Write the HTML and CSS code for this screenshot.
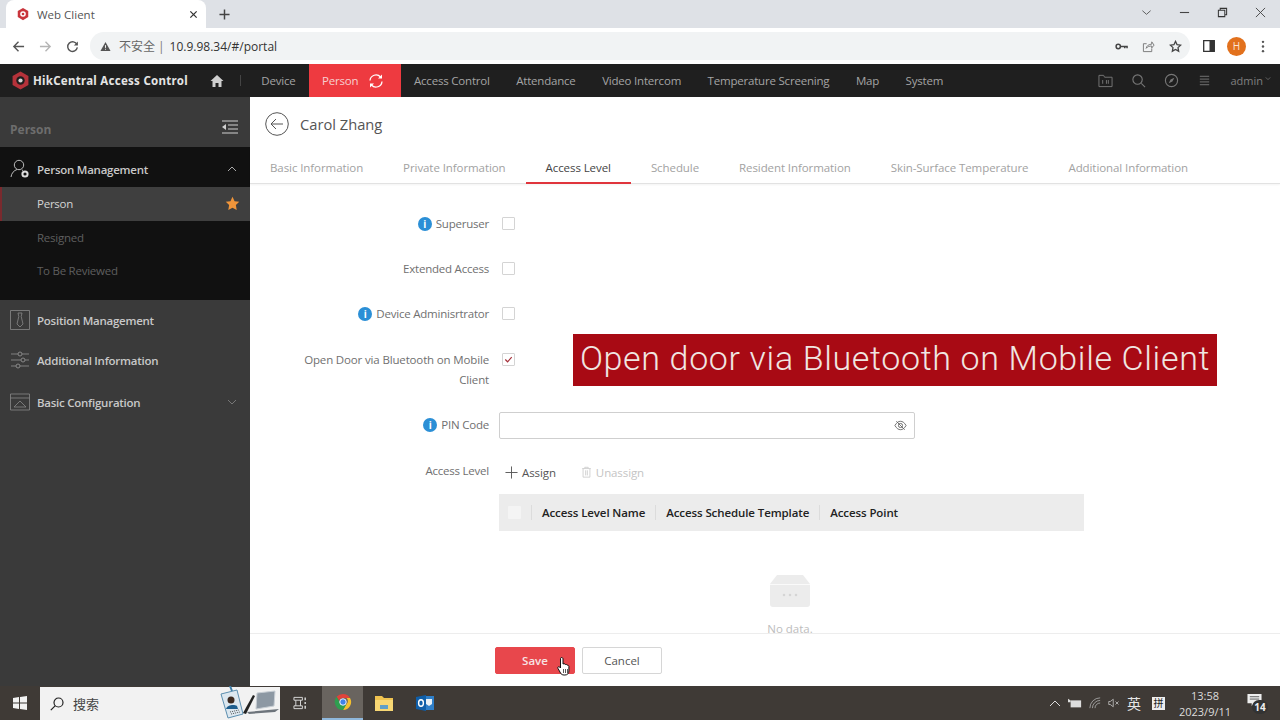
FILE: index.html
```html
<!DOCTYPE html>
<html lang="en">
<head>
    <meta charset="UTF-8">
    <meta name="viewport" content="width=device-width, initial-scale=1.0">
    <title>Web Client</title>
    <link rel="stylesheet" href="styles.css">
</head>
<body>
    <!-- browser chrome -->
    <div class="tabstrip">
        <div class="tab">
            <svg class="tab-logo" viewBox="0 0 16 16"><path d="M8 1l6 3.500v7L8 15l-6-3.500v-7z" fill="#c9353c"/><circle cx="8" cy="8" r="3.200" fill="#fff"/><circle cx="8" cy="8" r="1.500" fill="#c9353c"/></svg>
            <span class="tab-title">Web Client</span>
            <svg class="tab-close" viewBox="0 0 10 10"><path d="M1.500 1.500l7 7M8.500 1.500l-7 7" stroke="#333" stroke-width="1.400"/></svg>
        </div>
        <svg class="tab-new" viewBox="0 0 12 12"><path d="M6 .5v11M.5 6h11" stroke="#444" stroke-width="1.600"/></svg>
        <div class="window-btns">
            <svg viewBox="0 0 12 12"><path d="M1.500 4l4.500 4 4.500-4" fill="none" stroke="#555" stroke-width="1"/></svg>
            <svg viewBox="0 0 12 12"><path d="M1 6h10" stroke="#444" stroke-width="1.200"/></svg>
            <svg viewBox="0 0 12 12"><path d="M1.500 3.500h7v7h-7zM3.500 3.500v-2h7v7h-2" fill="none" stroke="#333" stroke-width="1.100"/></svg>
            <svg viewBox="0 0 12 12"><path d="M1 1l10 10M11 1L1 11" stroke="#444" stroke-width="1"/></svg>
        </div>
    </div>
    <div class="toolbar">
        <svg class="tool-icon" viewBox="0 0 14 14"><path d="M13 7H2M7 2L2 7l5 5" fill="none" stroke="#555" stroke-width="1.500"/></svg>
        <svg class="tool-icon" viewBox="0 0 14 14"><path d="M1 7h11M7 2l5 5-5 5" fill="none" stroke="#b5b5b5" stroke-width="1.500"/></svg>
        <svg class="tool-icon" viewBox="0 0 14 14"><path d="M11.800 5A5.200 5.200 0 1 0 12.200 8" fill="none" stroke="#555" stroke-width="1.500"/><path d="M12.800 1.500v4.300H8.500z" fill="#555"/></svg>
        <div class="omnibox">
            <svg class="warn-icon" viewBox="0 0 12 12"><path d="M6 1l5.500 10H.5z" fill="#555"/><path d="M6 4.500v3M6 8.500v1" stroke="#fff" stroke-width="1"/></svg>
            <span class="not-secure">不安全</span>
            <span class="omni-sep">|</span>
            <span class="url">10.9.98.34/#/portal</span>
            <div class="omni-actions">
                <svg viewBox="0 0 14 14"><circle cx="3.500" cy="7" r="2.300" fill="none" stroke="#444" stroke-width="1.600"/><path d="M6 7h7v2M10.500 7v2" fill="none" stroke="#444" stroke-width="1.600"/></svg>
                <svg viewBox="0 0 14 14"><path d="M5 4H1.500v8.500h9V9M4.500 9c.5-3 3-4.500 6-4.500V2L13 5.500 10.500 8.500V6.500c-2.500 0-4.500.5-6 2.500z" fill="none" stroke="#777" stroke-width="1"/></svg>
                <svg viewBox="0 0 14 14"><path d="M7 1.500l1.700 3.600 3.800.5-2.800 2.600.7 3.800L7 10.100 3.600 12l.7-3.800L1.500 5.600l3.800-.5z" fill="none" stroke="#444" stroke-width="1.400"/></svg>
            </div>
        </div>
        <svg class="side-panel" viewBox="0 0 12 12"><path d="M.7.700h10.600v10.600H.7z" fill="#fff" stroke="#333" stroke-width="1.300"/><path d="M6.500 1h5v10h-5z" fill="#333"/></svg>
        <div class="avatar">H</div>
        <svg class="kebab" viewBox="0 0 4 14"><circle cx="2" cy="2" r="1.300" fill="#555"/><circle cx="2" cy="7" r="1.300" fill="#555"/><circle cx="2" cy="12" r="1.300" fill="#555"/></svg>
    </div>

    <!-- app header -->
    <div class="appbar">
        <div class="brand">
            <svg class="brand-logo" viewBox="0 0 18 18"><path d="M9 .5l7.500 4.200v8.600L9 17.500l-7.500-4.200V4.700z" fill="#b5323a"/><circle cx="9" cy="9" r="4" fill="#1f1f1f"/><circle cx="9" cy="9" r="2" fill="#d8d8d8"/></svg>
            <span class="brand-name">HikCentral Access Control</span>
        </div>
        <svg class="home-icon" viewBox="0 0 14 14"><path d="M7 1L.5 7H2.500v6H5.500V9h3v4h3V7h2z" fill="#cfcfcf"/></svg>
        <span class="nav-sep"></span>
        <nav class="nav">
            <a class="nav-item">Device</a>
            <a class="nav-item active">Person
                <svg class="sync-icon" viewBox="0 0 16 16"><path d="M2 7.500A6 6 0 0 1 12.500 4M14 8.500A6 6 0 0 1 3.500 12" fill="none" stroke="#fff" stroke-width="1.300"/><path d="M14 1.500v4h-4zM2 14.500v-4h4z" fill="#fff"/></svg>
            </a>
            <a class="nav-item">Access Control</a>
            <a class="nav-item">Attendance</a>
            <a class="nav-item">Video Intercom</a>
            <a class="nav-item">Temperature Screening</a>
            <a class="nav-item">Map</a>
            <a class="nav-item">System</a>
        </nav>
        <div class="app-actions">
            <svg viewBox="0 0 16 14"><path d="M1 1.500h5l1 2h8v10H1z" fill="none" stroke="#777" stroke-width="1"/><path d="M5 6.500v4M9 6.500v4M11 6.500v4" stroke="#777" stroke-width="1"/></svg>
            <svg viewBox="0 0 16 16"><circle cx="7" cy="7" r="5" fill="none" stroke="#777" stroke-width="1.200"/><path d="M11 11l4 4" stroke="#777" stroke-width="1.200"/></svg>
            <svg viewBox="0 0 16 16"><circle cx="8" cy="8" r="6.500" fill="none" stroke="#777" stroke-width="1.200"/><path d="M11 5L9 9 5 11l2-4z" fill="#777"/></svg>
            <svg viewBox="0 0 16 16"><path d="M3 3.500h10M3 6.500h10M3 9.500h10M3 12.500h10" stroke="#777" stroke-width="1"/></svg>
            <span class="admin">admin</span>
            <svg class="admin-caret" viewBox="0 0 8 5"><path d="M1 1l3 3 3-3" fill="none" stroke="#777" stroke-width="1"/></svg>
        </div>
    </div>

    <div class="main">
        <aside class="sidebar">
            <div class="side-head">
                <span class="side-title">Person</span>
                <svg class="collapse-icon" viewBox="0 0 18 14"><path d="M1 1h16M7 5h10M7 9h10M1 13h16" stroke="#d0d0d0" stroke-width="1.100"/><path d="M5 4v6L1 7z" fill="#d0d0d0"/></svg>
            </div>
            <div class="side-group open">
                <div class="side-item">
                    <svg class="side-icon" viewBox="0 0 20 20"><circle cx="9" cy="6" r="4.700" fill="none" stroke="#bbb" stroke-width="1"/><path d="M1 18c.5-4 3-6.500 6-7.500M12 11l1 .5" fill="none" stroke="#bbb" stroke-width="1"/><circle cx="15" cy="15" r="2.600" fill="none" stroke="#ddd" stroke-width="2"/></svg>
                    <span class="side-label">Person Management</span>
                    <svg class="chevron" viewBox="0 0 10 6"><path d="M1 5l4-4 4 4" fill="none" stroke="#aaa" stroke-width="1"/></svg>
                </div>
                <div class="side-sub current">
                    <span>Person</span>
                    <svg class="star" viewBox="0 0 16 16"><path d="M8 .8l2.200 4.700 5 .7-3.600 3.500.9 5.100L8 12.400l-4.500 2.400.9-5.100L.8 6.200l5-.7z" fill="#f0953a"/></svg>
                </div>
                <div class="side-sub">Resigned</div>
                <div class="side-sub">To Be Reviewed</div>
            </div>
            <div class="side-item">
                <svg class="side-icon" viewBox="0 0 20 20"><path d="M.5.500h19v19H.5z" fill="none" stroke="#888" stroke-width=".8"/><path d="M8 3h4l-.8 3.500L13 14l-3 3-3-3 1.800-7.500z" fill="none" stroke="#888" stroke-width=".8"/></svg>
                <span class="side-label">Position Management</span>
            </div>
            <div class="side-item">
                <svg class="side-icon" viewBox="0 0 20 20"><path d="M1 4h18M1 10h18M1 16h18" stroke="#888" stroke-width=".9"/><circle cx="10" cy="4" r="2" fill="#3a3a3a" stroke="#888"/><circle cx="13" cy="10" r="2" fill="#3a3a3a" stroke="#888"/><circle cx="8" cy="16" r="2" fill="#3a3a3a" stroke="#888"/></svg>
                <span class="side-label">Additional Information</span>
            </div>
            <div class="side-item config">
                <svg class="side-icon" viewBox="0 0 20 18"><path d="M.5 1h19v16H.5zM.5 5h19" fill="none" stroke="#888" stroke-width=".8"/><path d="M4 14l3-3 3-3 3 3 3 3z" fill="none" stroke="#888" stroke-width=".8"/></svg>
                <span class="side-label">Basic Configuration</span>
                <svg class="chevron" viewBox="0 0 10 6"><path d="M1 1l4 4 4-4" fill="none" stroke="#777" stroke-width="1"/></svg>
            </div>
        </aside>

        <section class="content">
            <div class="page-head">
                <svg class="back-icon" viewBox="0 0 24 24"><circle cx="12" cy="12" r="11.300" fill="none" stroke="#555" stroke-width="1"/><path d="M18 12H6M11 7l-5 5 5 5" fill="none" stroke="#555" stroke-width="1"/></svg>
                <h1 class="page-title">Carol Zhang</h1>
            </div>
            <div class="tabs">
                <a class="tab-link">Basic Information</a>
                <a class="tab-link">Private Information</a>
                <a class="tab-link active">Access Level</a>
                <a class="tab-link">Schedule</a>
                <a class="tab-link">Resident Information</a>
                <a class="tab-link">Skin-Surface Temperature</a>
                <a class="tab-link">Additional Information</a>
            </div>

            <div class="form">
                <div class="form-row">
                    <div class="form-label"><span class="info">i</span>Superuser</div>
                    <span class="checkbox"></span>
                </div>
                <div class="form-row">
                    <div class="form-label">Extended Access</div>
                    <span class="checkbox"></span>
                </div>
                <div class="form-row">
                    <div class="form-label"><span class="info">i</span>Device Adminisrtrator</div>
                    <span class="checkbox"></span>
                </div>
                <div class="form-row tall">
                    <div class="form-label">Open Door via Bluetooth on Mobile Client</div>
                    <span class="checkbox">
                        <svg viewBox="0 0 12 12"><path d="M2.500 6l2.500 2.500 4.500-5" fill="none" stroke="#a5303a" stroke-width="1.300"/></svg>
                    </span>
                </div>
                <div class="form-row pin">
                    <div class="form-label"><span class="info">i</span>PIN Code</div>
                    <div class="pin-input">
                        <svg viewBox="0 0 14 14"><path d="M1 7c2-3.500 4-4.500 6-4.500S11 3.500 13 7c-2 3.500-4 4.500-6 4.500S3 10.500 1 7z" fill="none" stroke="#666" stroke-width="1"/><circle cx="7" cy="7" r="2.200" fill="none" stroke="#666"/><path d="M2.500 2.500l9 9" stroke="#666" stroke-width="1"/></svg>
                    </div>
                </div>
                <div class="form-row level">
                    <div class="form-label">Access Level</div>
                    <div class="level-body">
                        <div class="level-actions">
                            <span class="action">
                                <svg viewBox="0 0 14 14"><path d="M7 .5v13M.5 7h13" stroke="#555" stroke-width="1"/></svg>Assign
                            </span>
                            <span class="action off">
                                <svg viewBox="0 0 12 14"><path d="M1 3h10M4 3V1.500h4V3M2 3v10h8V3M5 5v6M7 5v6" fill="none" stroke="#ccc" stroke-width="1"/></svg>Unassign
                            </span>
                        </div>
                        <div class="table-head">
                            <span class="th-check"></span>
                            <span class="th">Access Level Name</span>
                            <span class="th">Access Schedule Template</span>
                            <span class="th">Access Point</span>
                        </div>
                        <div class="empty">
                            <svg viewBox="0 0 40 32"><path d="M7 0h26l7 9v20a3 3 0 0 1-3 3H3a3 3 0 0 1-3-3V9z" fill="#ececec"/><path d="M0 9.500h40" stroke="#fafafa"/><circle cx="14" cy="20" r="1.300" fill="#d5d5d5"/><circle cx="20" cy="20" r="1.300" fill="#d5d5d5"/><circle cx="26" cy="20" r="1.300" fill="#d5d5d5"/></svg>
                            <span>No data.</span>
                        </div>
                    </div>
                </div>
            </div>

            <div class="form-footer">
                <button class="btn primary">Save</button>
                <button class="btn">Cancel</button>
            </div>

            <div class="banner">Open door via Bluetooth on Mobile Client</div>
            <svg class="hand-cursor" viewBox="0 0 14 20"><path d="M4.500 1.500c1 0 1.500.7 1.500 1.500v5l1-.3c.8 0 1.200.3 1.400.8.800-.3 1.500 0 1.700.7.800-.2 1.700.2 1.800 1.100V15c0 2.500-1.500 4-4 4H7c-1.800 0-2.800-.8-3.500-2L1 12.500c-.5-1 0-1.800.8-1.800.7 0 1.300.5 1.700 1.300V3c0-.8.300-1.500 1-1.500z" fill="#fff" stroke="#111" stroke-width="1"/><path d="M6.500 13v4M8.500 13v4M10.500 13v4" stroke="#111" stroke-width=".7"/></svg>
        </section>
    </div>

    <!-- windows taskbar -->
    <div class="taskbar">
        <div class="start">
            <svg viewBox="0 0 14 14"><path d="M0 2l6-1v5.500H0zM7 .9L14 0v6.500H7zM0 7.500h6V13l-6-1zM7 7.500h7V14l-7-1z" fill="#f2f2f2"/></svg>
        </div>
        <div class="searchbox">
            <svg class="search-glass" viewBox="0 0 14 14"><circle cx="8.500" cy="5.500" r="4.500" fill="none" stroke="#222" stroke-width="1.200"/><path d="M5.300 8.700L.8 13.200" stroke="#222" stroke-width="1.200"/></svg>
            <span class="search-text">搜索</span>
            <svg class="search-art" viewBox="0 0 60 34"><path d="M2 8l16-4 6 24-15 4z" fill="#dce7ef" stroke="#5c8fb0"/><circle cx="12" cy="14" r="3.500" fill="#3d2a20"/><path d="M7 23c1-4 8-5 11-3l1 3z" fill="#1e5e8e"/><path d="M11 26l9-2M12 28l9-2" stroke="#555" stroke-width="1" stroke-dasharray="1 1"/><path d="M11 0l2 5" stroke="#3f7fa8" stroke-width="2"/><path d="M24 27l10-18 2 1-9 18z" fill="#222"/><path d="M38 7l18-2-1 15-18 3z" fill="#8d98a3" stroke="#c8ced4"/><path d="M28 26l32-3-4 3-26 2z" fill="#6d747b"/></svg>
        </div>
        <svg class="task-view" viewBox="0 0 16 14"><path d="M1 1h9v3H1zM1 10h9v3H1zM3 4v6M8 4v6" fill="none" stroke="#ddd" stroke-width="1"/><path d="M13 1v3M13 6v2M13 10v3" stroke="#ddd" stroke-width="1.500"/></svg>
        <div class="task-app current">
            <svg viewBox="0 0 20 20"><path d="M10 1a9 9 0 0 1 7.800 4.500H10a4.500 4.500 0 0 0-4.300 3.100L2.900 4.300A9 9 0 0 1 10 1z" fill="#e0433a"/><path d="M17.800 5.500A9 9 0 0 1 10 19l3.900-6.700a4.500 4.500 0 0 0 0-6.800z" fill="#f5c02e"/><path d="M2.900 4.300L6.800 11a4.500 4.500 0 0 0 7.100 1.300L10 19A9 9 0 0 1 2.900 4.300z" fill="#2f9e4f"/><circle cx="10" cy="10" r="3.600" fill="#3f82e8" stroke="#fff" stroke-width="1"/></svg>
        </div>
        <div class="task-app">
            <svg viewBox="0 0 20 18"><path d="M1 2h7l2 2h9v13H1z" fill="#f0c350"/><path d="M1 6h18v11H1z" fill="#f7d774"/><path d="M6 11h8v4H6z" fill="#5f9fc8"/></svg>
        </div>
        <div class="task-app">
            <svg viewBox="0 0 20 18"><path d="M8 2h11v14H8z" fill="#2f7fc9"/><path d="M11 5h6v5l-3 2-3-2z" fill="#e8f0f6"/><path d="M1 3l10-2v16L1 15z" fill="#0f5ea8"/><ellipse cx="6" cy="9" rx="2.400" ry="3.200" fill="none" stroke="#fff" stroke-width="1.400"/></svg>
        </div>
        <div class="tray">
            <svg class="tray-icon" viewBox="0 0 12 8"><path d="M1 7l5-5 5 5" fill="none" stroke="#ddd" stroke-width="1"/></svg>
            <svg class="tray-icon wide" viewBox="0 0 16 10"><path d="M3 2h12v8H3z" fill="#ddd"/><path d="M0 0l3 2v2H0z" fill="#ddd"/></svg>
            <svg class="tray-icon" viewBox="0 0 14 14"><path d="M1 13a12 12 0 0 1 12-12M4 13a9 9 0 0 1 9-9M7 13a6 6 0 0 1 6-6" fill="none" stroke="#aaa" stroke-width="1"/></svg>
            <svg class="tray-icon" viewBox="0 0 16 12"><path d="M1 4h2l4-3v10L3 8H1z" fill="none" stroke="#ccc" stroke-width="1"/><path d="M10 4l4 4M14 4l-4 4" stroke="#ccc" stroke-width="1"/></svg>
            <span class="ime">英</span>
            <span class="ime-box">拼</span>
            <div class="clock"><span>13:58</span><span>2023/9/11</span></div>
            <div class="notify">
                <svg viewBox="0 0 16 14"><path d="M.5.500h15v10H8L5 13.500v-3H.5z" fill="#eee"/><path d="M3 3.500h10M3 6h10" stroke="#555"/></svg>
                <span class="notify-count">14</span>
            </div>
        </div>
    </div>
</body>
</html>
```

FILE: styles.css
```css
* {
    box-sizing: border-box;
}

body {
    margin: 0;
    width: 1280px;
    height: 720px;
    overflow: hidden;
    display: flex;
    flex-direction: column;
    font-family: 'Open Sans', 'Noto Sans CJK SC', sans-serif;
    font-size: 12px;
    background: #fff;
}

/* browser chrome */
.tabstrip {
    height: 28px;
    flex: none;
    display: flex;
    align-items: center;
    background: #dee1e6;
    padding-left: 6px;
}

.tab {
    width: 200px;
    height: 28px;
    display: flex;
    align-items: center;
    background: #fff;
    border-radius: 8px 8px 0 0;
    padding: 0 8px 0 10px;
}

.tab-logo {
    width: 14px;
    height: 14px;
    margin-right: 7px;
}

.tab-title {
    flex: 1;
    color: #555;
    font-size: 11.5px;
}

.tab-close {
    width: 9px;
    height: 9px;
}

.tab-new {
    width: 11px;
    height: 11px;
    margin-left: 13px;
}

.window-btns {
    margin-left: auto;
    display: flex;
    gap: 27px;
    align-items: center;
    height: 24px;
    padding-right: 14px;
    align-self: flex-start;
}

.window-btns svg {
    width: 11px;
    height: 11px;
}

.toolbar {
    height: 36px;
    flex: none;
    display: flex;
    align-items: center;
    background: #fff;
    padding-left: 12px;
}

.tool-icon {
    width: 13px;
    height: 13px;
    margin-right: 14px;
}

.omnibox {
    width: 1100px;
    height: 28px;
    margin-left: -3px;
    display: flex;
    align-items: center;
    background: #f1f3f4;
    border-radius: 14px;
    padding: 0 8px 0 10px;
    color: #333;
}

.warn-icon {
    width: 11px;
    height: 11px;
    margin-right: 8px;
}

.not-secure {
    color: #666;
    font-size: 12px;
}

.omni-sep {
    color: #777;
    margin: 0 5px 0 3px;
}

.url {
    font-size: 12px;
    color: #333;
}

.omni-actions {
    margin-left: auto;
    display: flex;
    gap: 14px;
}

.omni-actions svg {
    width: 13px;
    height: 13px;
}

.side-panel {
    width: 12px;
    height: 12px;
    margin-left: 13px;
}

.avatar {
    width: 19px;
    height: 19px;
    margin-left: 12px;
    border-radius: 50%;
    background: #e2711d;
    color: #fbe5d3;
    font-size: 10px;
    text-align: center;
    line-height: 19px;
}

.kebab {
    width: 4px;
    height: 13px;
    margin-left: 15px;
}

/* app header */
.appbar {
    height: 33px;
    flex: none;
    display: flex;
    align-items: center;
    background: #1f1f1f;
    color: #a9a9a9;
}

.brand {
    width: 210px;
    display: flex;
    align-items: center;
    padding-left: 11px;
}

.brand-logo {
    width: 19px;
    height: 19px;
    margin-right: 3px;
}

.brand-name {
    color: #e4e4e4;
    font-weight: 700;
    font-size: 11.5px;
    letter-spacing: .27px;
    white-space: nowrap;
    font-family: 'Noto Sans', sans-serif;
}

.home-icon {
    width: 14px;
    height: 14px;
}

.nav-sep {
    width: 1px;
    height: 11px;
    background: #444;
    margin: 0 7px 0 16px;
}

.nav {
    display: flex;
    height: 100%;
}

.nav-item {
    display: flex;
    align-items: center;
    padding: 0 13.25px;
    white-space: nowrap;
    color: #a4a4a4;
    font-size: 11.5px;
    letter-spacing: -.2px;
}

.nav-item.active {
    background: #ee3a40;
    color: #f6d0d0;
    width: 92px;
    gap: 10px;
}

.sync-icon {
    width: 16px;
    height: 16px;
}

.app-actions {
    margin-left: auto;
    display: flex;
    align-items: center;
    padding-right: 9px;
}

.app-actions svg {
    width: 15px;
    height: 15px;
    margin-right: 18px;
}

.admin {
    color: #7f7f7f;
    font-size: 11px;
}

.app-actions .admin-caret {
    width: 6px;
    height: 5px;
    margin: 0 0 4px 2px;
}

/* main area */
.main {
    flex: 1;
    min-height: 0;
    display: flex;
}

.sidebar {
    width: 250px;
    flex: none;
    background: #3a3a3a;
    color: #c8c8c8;
}

.side-head {
    height: 50px;
    display: flex;
    align-items: center;
    justify-content: space-between;
    padding: 14px 11px 0 10px;
}

.side-title {
    font-weight: 700;
    color: #6d6d6d;
    font-size: 12px;
}

.collapse-icon {
    width: 18px;
    height: 14px;
    margin-bottom: 4px;
}

.side-group.open {
    background: #111;
    height: 153px;
}

.side-item {
    height: 40px;
    display: flex;
    align-items: center;
    padding: 0 13px 0 10px;
    font-weight: 600;
    font-size: 11.5px;
    letter-spacing: -.25px;
}

.side-group .side-item {
    padding-top: 4px;
}

.side-item.config {
    padding-top: 4px;
}

.side-label {
    flex: 1;
    margin-left: 7px;
    white-space: nowrap;
}

.side-icon {
    width: 20px;
    height: 20px;
    flex: none;
}

.chevron {
    width: 10px;
    height: 6px;
}

.side-sub {
    height: 33.500px;
    display: flex;
    align-items: center;
    justify-content: space-between;
    padding: 0 10px 0 37px;
    color: #5f5f5f;
    font-size: 11.500px;
    letter-spacing: -.25px;
}

.side-sub.current {
    background: #3f3f3f;
    color: #d5d5d5;
    border-left: 2px solid #7a2a2e;
    padding-left: 35px;
}

.star {
    width: 15px;
    height: 15px;
}

/* content */
.content {
    flex: 1;
    position: relative;
    display: flex;
    flex-direction: column;
    min-width: 0;
}

.page-head {
    height: 53px;
    flex: none;
    display: flex;
    align-items: center;
    padding-left: 15px;
}

.back-icon {
    width: 24px;
    height: 24px;
    margin-right: 11px;
}

.page-title {
    margin: 0;
    font-weight: 400;
    font-size: 14.700px;
    color: #555;
}

.tabs {
    height: 34px;
    flex: none;
    display: flex;
    border-bottom: 1px solid #e2e2e2;
    box-shadow: 0 1px 2px rgba(0, 0, 0, 0.05);
}

.tab-link {
    padding: 0 20px;
    line-height: 35px;
    height: 34px;
    white-space: nowrap;
    color: #a2a2a2;
    font-size: 11.500px;
    letter-spacing: -.08px;
}

.tab-link.active {
    color: #444;
    border-bottom: 2px solid #e0353c;
}

.form {
    flex: 1;
    min-height: 0;
    padding-top: 18px;
}

.form-row {
    display: flex;
    align-items: flex-start;
    height: 45px;
}

.form-row.tall {
    height: 66px;
}

.form-row.tall .form-label {
    padding-top: 13px;
    padding-left: 40px;
    letter-spacing: -.15px;
}

.form-row.tall .checkbox {
    margin-top: 16px;
}

.form-label {
    width: 239px;
    text-align: right;
    color: #707070;
    font-size: 11.500px;
    line-height: 20px;
    padding: 12px 0 0 48px;
    letter-spacing: -.22px;
}

.form-row.level .form-label {
    padding-top: 13px;
}

.info {
    display: inline-block;
    width: 14px;
    height: 14px;
    border-radius: 50%;
    background: #2b8fd6;
    color: #fff;
    font-size: 10px;
    line-height: 14px;
    font-weight: 700;
    text-align: center;
    margin-right: 4px;
    letter-spacing: 0;
}

.checkbox {
    width: 13px;
    height: 13px;
    margin: 15px 0 0 13px;
    border: 1px solid #d4d4d4;
    border-radius: 1px;
    display: block;
}

.checkbox svg {
    display: block;
    width: 11px;
    height: 11px;
}

.pin-input {
    width: 416px;
    height: 27px;
    margin: 9px 0 0 10px;
    border: 1px solid #cfcfcf;
    border-radius: 2px;
    display: flex;
    align-items: center;
    justify-content: flex-end;
    padding-right: 7px;
}

.pin-input svg {
    width: 13px;
    height: 13px;
}

.form-row.level {
    height: 170px;
}

.level-body {
    margin-left: 10px;
    width: 585px;
}

.level-actions {
    display: flex;
    align-items: center;
    height: 30px;
    margin-top: 9px;
    gap: 25px;
    padding-left: 6px;
}

.action {
    display: flex;
    align-items: center;
    gap: 4px;
    color: #555;
    font-size: 11.500px;
    letter-spacing: -.1px;
}

.action svg {
    width: 13px;
    height: 13px;
}

.action.off {
    color: #c4c4c4;
}

.action.off svg {
    width: 11px;
    height: 12px;
}

.table-head {
    height: 37px;
    margin-top: 7px;
    display: flex;
    align-items: center;
    background: #ececec;
    color: #222;
    font-weight: 600;
    font-size: 11.500px;
    letter-spacing: -.1px;
}

.th-check {
    width: 13px;
    height: 13px;
    margin: 0 10px 0 9px;
    background: #f4f4f4;
    border-radius: 1px;
}

.th {
    padding: 0 10px;
    border-left: 1px solid #dcdcdc;
    white-space: nowrap;
}

.empty {
    display: flex;
    flex-direction: column;
    align-items: center;
    gap: 14px;
    margin-top: 44px;
    padding-right: 3px;
    color: #bdbdbd;
    font-size: 11.500px;
}

.empty svg {
    width: 40px;
    height: 32px;
}

.form-footer {
    height: 53px;
    flex: none;
    display: flex;
    align-items: center;
    gap: 7px;
    padding: 1px 0 0 245px;
    border-top: 1px solid #ededed;
    background: #fff;
}

.btn {
    width: 80px;
    height: 27px;
    padding: 0;
    border: 1px solid #d6d6d6;
    border-radius: 2px;
    background: #fff;
    color: #555;
    font-family: inherit;
    font-size: 11.500px;
}

.btn.primary {
    background: #e8474c;
    border-color: #e8474c;
    color: #f7e4e4;
    font-weight: 600;
}

.banner {
    position: absolute;
    left: 323px;
    top: 237px;
    width: 644px;
    height: 52px;
    background: #a80a14;
    color: #f0e6e2;
    font-family: 'Roboto', sans-serif;
    font-size: 34px;
    line-height: 48px;
    text-align: center;
    white-space: nowrap;
    letter-spacing: .65px;
    font-weight: 300;
}

.hand-cursor {
    position: absolute;
    left: 307px;
    top: 559px;
    width: 14px;
    height: 20px;
}

/* windows taskbar */
.taskbar {
    height: 34px;
    flex: none;
    display: flex;
    align-items: center;
    background: #3f3a36;
    color: #e6e6e6;
}

.start {
    width: 40px;
    display: flex;
    justify-content: center;
}

.start svg {
    width: 14px;
    height: 14px;
}

.searchbox {
    width: 240px;
    height: 33px;
    margin-top: 1px;
    display: flex;
    align-items: center;
    background: #f2f2f2;
    color: #444;
    padding-left: 10px;
    position: relative;
}

.search-glass {
    width: 14px;
    height: 14px;
    margin-right: 9px;
}

.search-text {
    font-size: 13px;
}

.search-art {
    position: absolute;
    left: 179px;
    top: -1px;
    width: 60px;
    height: 34px;
}

.task-view {
    width: 15px;
    height: 14px;
    margin: 0 14px 0 13px;
}

.task-app {
    width: 41px;
    height: 34px;
    display: flex;
    align-items: center;
    justify-content: center;
}

.task-app.current {
    background: #69645f;
    border-bottom: 2px solid #8fb8dc;
}

.task-app svg {
    width: 20px;
    height: 18px;
}

.tray {
    margin-left: auto;
    display: flex;
    align-items: center;
    gap: 7px;
    padding-right: 12px;
}

.tray-icon {
    width: 12px;
    height: 12px;
}

.tray-icon.wide {
    width: 14px;
    height: 10px;
}

.ime {
    font-size: 14px;
}

.ime-box {
    width: 13px;
    height: 13px;
    background: #eee;
    color: #222;
    font-size: 10px;
    line-height: 13px;
    text-align: center;
    margin-left: 4px;
}

.clock {
    width: 62px;
    margin-left: 2px;
    padding-top: 1px;
    display: flex;
    flex-direction: column;
    align-items: center;
    font-size: 11px;
    line-height: 16px;
    color: #ddd;
}

.notify {
    position: relative;
    width: 21px;
    height: 24px;
    margin-left: 4px;
}

.notify svg {
    width: 15px;
    height: 14px;
    display: block;
    margin-top: 2px;
}

.notify-count {
    position: absolute;
    left: 5px;
    top: 9px;
    width: 16px;
    height: 14px;
    border-radius: 7px;
    background: #333;
    color: #eee;
    font-size: 10px;
    font-weight: 700;
    line-height: 14px;
    text-align: center;
}
```
